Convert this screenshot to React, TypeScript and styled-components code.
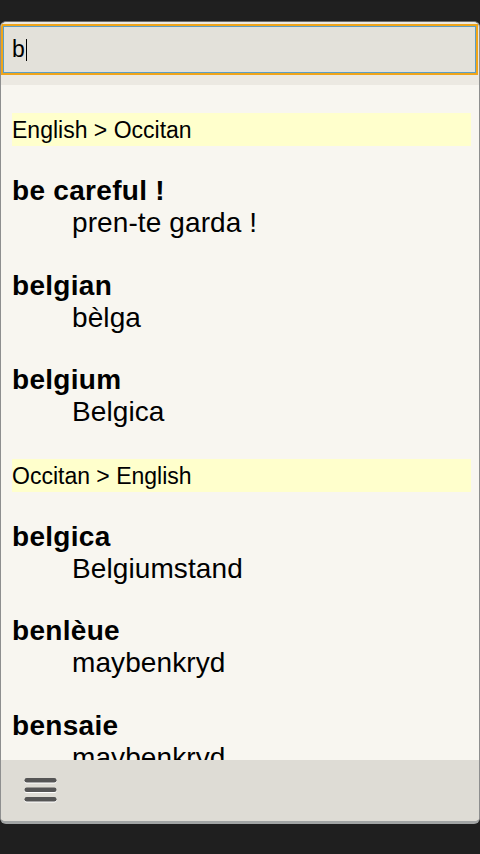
import React from 'react';
import styled, { createGlobalStyle } from 'styled-components';

const Global = createGlobalStyle`
  html, body { margin: 0; padding: 0; background: #1f1f1f; }
  body { font-family: "Liberation Sans", Arial, sans-serif; color: #000; }
`;

const Screen = styled.div`
  width: 480px;
  height: 854px;
  overflow: hidden;
  background: #1f1f1f;
  padding-top: 21px;
  box-sizing: border-box;
`;

const Window = styled.div`
  height: 803px;
  box-sizing: border-box;
  display: flex;
  flex-direction: column;
  background: #ece9e2;
  border: 1px solid #8e8f8f;
  border-top-color: #6c6c6c;
  border-bottom: 3px solid #a2a5a5;
  border-radius: 6px;
  overflow: hidden;
`;

const SearchBox = styled.div`
  margin: 2px 1px 0 0;
  height: 51px;
  box-sizing: border-box;
  border: 2px solid #efa51b;
  box-shadow: inset 0 0 0 1px #5b9ec6;
  background: #e3e1da;
  display: flex;
  align-items: center;
  padding: 0 0 0 9px;
  font-size: 23px;
  flex-shrink: 0;
`;

const Caret = styled.span`
  display: inline-block;
  width: 1px;
  height: 22px;
  background: #000;
  margin-left: 1px;
`;

const Results = styled.div`
  margin-top: 10px;
  flex: 1;
  overflow: hidden;
  background: #f8f6f0;
  padding: 28px 8px 0 11px;
`;

const Band = styled.div`
  height: 33px;
  line-height: 35px;
  font-size: 23px;
  background: #ffffcc;
  margin-bottom: 29px;
  white-space: nowrap;
`;

const Entry = styled.div`
  margin-bottom: 30.5px;
`;

const Term = styled.div`
  font-size: 28px;
  font-weight: bold;
  letter-spacing: 0.3px;
  line-height: 32px;
`;

const Translation = styled.div`
  font-size: 28px;
  letter-spacing: 0.1px;
  line-height: 32px;
  padding-left: 60px;
`;

const BottomBar = styled.div`
  height: 61px;
  flex-shrink: 0;
  background: #dedcd5;
  display: flex;
  align-items: center;
  padding-left: 23px;
`;

const MenuIcon = () => (
  <svg width="34" height="26" viewBox="0 0 34 26">
    {[0, 9.5, 19].map(y => (
      <g key={y}>
        <rect x="0.5" y={y + 1.5} width="32" height="4" rx="2" fill="#ffffff" />
        <rect x="0.5" y={y} width="32" height="4.5" rx="2.2" fill="#555555" />
      </g>
    ))}
  </svg>
);

type Pair = { term: string; tr: string };

const sections: { title: string; items: Pair[] }[] = [
  {
    title: 'English > Occitan',
    items: [
      { term: 'be careful !', tr: 'pren-te garda !' },
      { term: 'belgian', tr: 'bèlga' },
      { term: 'belgium', tr: 'Belgica' },
    ],
  },
  {
    title: 'Occitan > English',
    items: [
      { term: 'belgica', tr: 'Belgiumstand' },
      { term: 'benlèue', tr: 'maybenkryd' },
      { term: 'bensaie', tr: 'maybenkryd' },
      { term: 'bèlga', tr: 'belgian' },
    ],
  },
];

export default function App() {
  return (
    <Screen>
      <Global />
      <Window>
        <SearchBox>
          b<Caret />
        </SearchBox>
        <Results>
          {sections.map(s => (
            <React.Fragment key={s.title}>
              <Band>{s.title}</Band>
              {s.items.map(it => (
                <Entry key={it.term}>
                  <Term>{it.term}</Term>
                  <Translation>{it.tr}</Translation>
                </Entry>
              ))}
            </React.Fragment>
          ))}
        </Results>
        <BottomBar>
          <MenuIcon />
        </BottomBar>
      </Window>
    </Screen>
  );
}
